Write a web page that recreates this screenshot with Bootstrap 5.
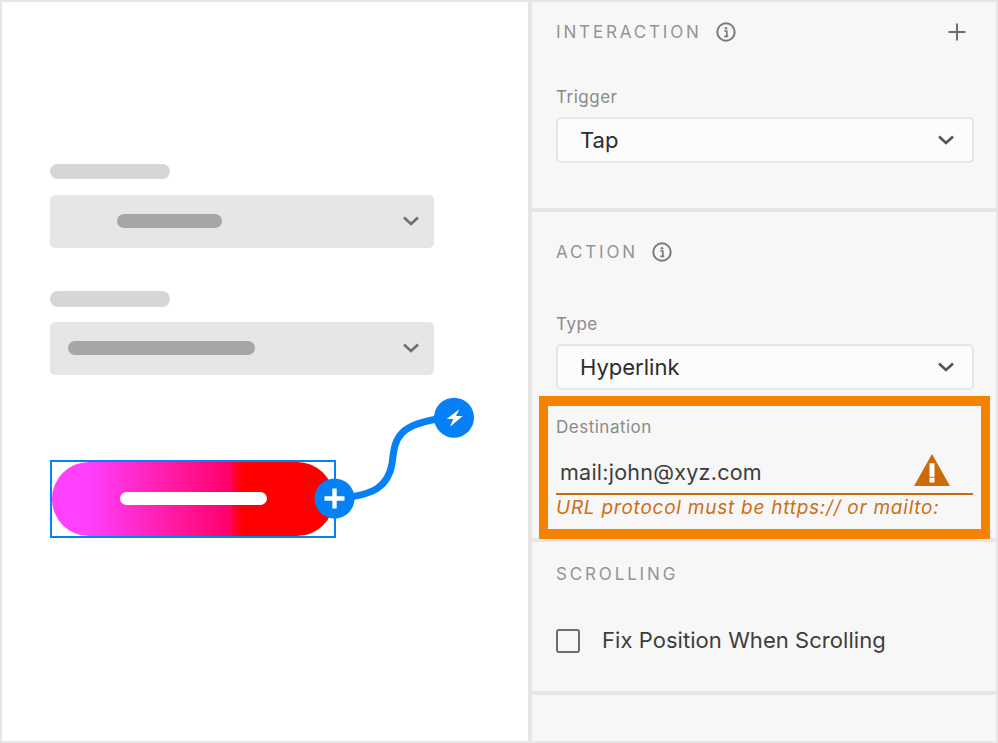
<!DOCTYPE html>
<html lang="en">
<head>
<meta charset="utf-8">
<title>Interaction panel</title>
<link href="https://cdn.jsdelivr.net/npm/bootstrap@5.3.0/dist/css/bootstrap.min.css" rel="stylesheet">
<style>
html,body{height:100%;margin:0}
body{font-family:Inter,"Liberation Sans",sans-serif;background:#fff;overflow:hidden}
.frame{width:998px;height:743px;background:#e6e6e6;padding:2px;gap:4px}
.stage{width:526px;background:#fff;padding:162px 0 0 48px}
.skel-label{width:120px;height:15px;border-radius:8px;background:#d6d6d6}
.skel-select{width:384px;height:53px;margin-top:16px;background:#e6e6e6;border-radius:5px;padding:0 14px 2px 18px}
.skel-bar{height:14px;border-radius:7px;background:#a6a6a6}
.skel-next{margin-top:43px;height:16px}
.skel-next + .skel-select{margin-top:15px}
.proto-wrap{width:286px;height:78px;margin-top:85px}
.proto-box{border:2px solid #0580f5}
.proto-btn{border-radius:37px;background:linear-gradient(90deg,#ff40ff 12%,#ff0066 63.800%,#ff0040 63.800%,#ff0000 68%)}
.proto-line{width:147px;height:13px;margin-bottom:1px;border-radius:7px;background:#fff}
.proto-overlay{position:absolute;left:260px;top:-64px;overflow:visible}
.inspector{width:464px;gap:4px}
.pane{background:#f7f7f7;padding:0 22px 0 24px}
.pane-one{height:206px;padding-top:17px}
.pane-two{height:326px;padding-top:27px}
.pane-three{height:149px;padding-top:19px}
.pane-four{flex:1}
.pane-head{font-size:17px;letter-spacing:2.85px;color:#949494;height:26px;line-height:26px}
.head-gap{gap:14px}
.field-label{font-size:17px;letter-spacing:.5px;color:#8a8a8a;line-height:22px}
.pick{height:46px;background:#fcfcfc;border:2px solid #e6e6e6;border-radius:5px;padding:0 17px 0 22px;font-size:22px;color:#2c2c2c}
.trigger-label{margin-top:41px;margin-bottom:9px}
.type-label{margin-top:48px;margin-bottom:9px}
.dest-box{position:relative;z-index:2;margin:6px -16px 0 -17px;height:143px;border:solid #f58300;border-width:10px 9px;padding:0 8px}
.dest-label{padding-top:10px}
.dest-input{height:57px;padding:13px 23px 0 4px;font-size:21.5px;letter-spacing:.25px;color:#3d3d3d;border-bottom:2px solid #cc6a0c}
.warn-mark{margin-bottom:4px}
.dest-err{font-size:19px;font-style:italic;letter-spacing:.75px;color:#cf6e12;line-height:26px}
.check-row{margin-top:37px;gap:22px;font-size:22px;letter-spacing:.05px;color:#3d3d3d}
.check-box{width:24px;height:24px;border:2px solid #6e6e6e;border-radius:3px}
</style>
</head>
<body>
<div class="frame d-flex">
  <main class="stage">
    <div class="skel-label"></div>
    <div class="skel-select d-flex align-items-center">
      <div class="skel-bar" style="width:105px;margin-left:49px"></div>
      <svg class="ms-auto" width="18" height="12" viewBox="0 0 18 12"><path d="M2 2.500 9 9l7-6.500" fill="none" stroke="#6e6e6e" stroke-width="2.600"/></svg>
    </div>
    <div class="skel-label skel-next"></div>
    <div class="skel-select d-flex align-items-center">
      <div class="skel-bar" style="width:187px"></div>
      <svg class="ms-auto" width="18" height="12" viewBox="0 0 18 12"><path d="M2 2.500 9 9l7-6.500" fill="none" stroke="#6e6e6e" stroke-width="2.600"/></svg>
    </div>
    <div class="proto-wrap position-relative">
      <div class="proto-box h-100">
        <div class="proto-btn h-100 d-flex align-items-center justify-content-center"><div class="proto-line"></div></div>
      </div>
      <svg class="proto-overlay" width="170" height="170" viewBox="0 0 170 170">
        <path d="M30 102C65 99 78 90 82 68 85 45 84 28 135 22" fill="none" stroke="#0580f5" stroke-width="7"/>
        <circle cx="24.500" cy="102.500" r="20" fill="#0580f5"/>
        <path d="M24.500 92.500v20M14.500 102.500h20" stroke="#fff" stroke-width="4.400"/>
        <circle cx="144" cy="21.700" r="20" fill="#0580f5"/>
        <path d="M149.300 13.300 136.700 23h6.600L140 30.700 152.700 20H146z" fill="#fff"/>
      </svg>
    </div>
  </main>
  <aside class="inspector d-flex flex-column">
    <section class="pane pane-one">
      <div class="d-flex align-items-center head-gap pane-head">
        <span>INTERACTION</span>
        <svg width="20" height="20" viewBox="0 0 20 20"><circle cx="10" cy="10" r="8.700" fill="none" stroke="#7a7a7a" stroke-width="2"/><circle cx="10" cy="6.200" r="1.300" fill="#7a7a7a"/><path d="M8.300 9h2.500v5M8.200 14.300h4" fill="none" stroke="#7a7a7a" stroke-width="1.700"/></svg>
        <svg class="ms-auto" style="margin-right:7px" width="20" height="20" viewBox="0 0 20 20"><path d="M10 1.500v17M1.500 10h17" stroke="#6e6e6e" stroke-width="2"/></svg>
      </div>
      <div class="field-label trigger-label">Trigger</div>
      <div class="pick d-flex align-items-center justify-content-between"><span>Tap</span><svg width="18" height="12" viewBox="0 0 18 12"><path d="M2 2.500 9 9l7-6.500" fill="none" stroke="#555" stroke-width="2.600"/></svg></div>
    </section>
    <section class="pane pane-two">
      <div class="d-flex align-items-center head-gap pane-head">
        <span>ACTION</span>
        <svg width="20" height="20" viewBox="0 0 20 20"><circle cx="10" cy="10" r="8.700" fill="none" stroke="#7a7a7a" stroke-width="2"/><circle cx="10" cy="6.200" r="1.300" fill="#7a7a7a"/><path d="M8.300 9h2.500v5M8.200 14.300h4" fill="none" stroke="#7a7a7a" stroke-width="1.700"/></svg>
      </div>
      <div class="field-label type-label">Type</div>
      <div class="pick d-flex align-items-center justify-content-between"><span>Hyperlink</span><svg width="18" height="12" viewBox="0 0 18 12"><path d="M2 2.500 9 9l7-6.500" fill="none" stroke="#555" stroke-width="2.600"/></svg></div>
      <div class="dest-box">
        <div class="field-label dest-label">Destination</div>
        <div class="dest-input d-flex align-items-center justify-content-between"><span>mail:john@xyz.com</span>
          <svg class="warn-mark" width="36" height="32" viewBox="0 0 36 32"><path d="M18 0 36 32H0z" fill="#cc6a0c"/><path d="M15.500 9.300h5v13.400h-5zM15.500 23.800h5v4.700h-5z" fill="#fff"/></svg>
        </div>
        <div class="dest-err">URL protocol must be https:// or mailto:</div>
      </div>
    </section>
    <section class="pane pane-three">
      <div class="pane-head">SCROLLING</div>
      <div class="d-flex align-items-center check-row"><span class="check-box"></span><span>Fix Position When Scrolling</span></div>
    </section>
    <section class="pane pane-four"></section>
  </aside>
</div>
</body>
</html>
